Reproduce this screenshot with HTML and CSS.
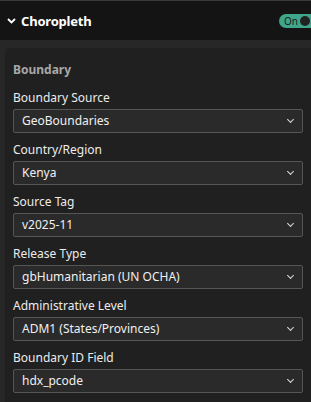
FILE: index.html
```html
<!DOCTYPE html>
<html lang="en">
<head>
    <meta charset="UTF-8">
    <meta name="viewport" content="width=device-width, initial-scale=1.0">
    <title>Choropleth</title>
    <link rel="stylesheet" href="styles.css">
</head>
<body>
  <div class="header">
    <svg class="caret" width="9" height="6" viewBox="0 0 9 6">
      <path d="M1 1 L4.5 4.5 L8 1" fill="none" stroke="#ffffff" stroke-width="1.8"/>
    </svg>
    <span class="title">Choropleth</span>
    <div class="toggle">
      <span>On</span>
      <div class="knob"></div>
    </div>
  </div>

  <div class="content">
    <div class="panel">
      <div class="section-title">Boundary</div>

      <div class="field">
        <label>Boundary Source</label>
        <div class="select">GeoBoundaries</div>
      </div>

      <div class="field">
        <label>Country/Region</label>
        <div class="select">Kenya</div>
      </div>

      <div class="field">
        <label>Source Tag</label>
        <div class="select">v2025-11</div>
      </div>

      <div class="field">
        <label>Release Type</label>
        <div class="select">gbHumanitarian (UN OCHA)</div>
      </div>

      <div class="field">
        <label>Administrative Level</label>
        <div class="select">ADM1 (States/Provinces)</div>
      </div>

      <div class="field">
        <label>Boundary ID Field</label>
        <div class="select">hdx_pcode</div>
      </div>
    </div>
  </div>
</body>
</html>
```

FILE: styles.css
```css
* {
    margin: 0;
    padding: 0;
    box-sizing: border-box;
}

body {
    font-family: 'Noto Sans', 'Open Sans', sans-serif;
    background: #272727;
    color: #e8e8e8;
    height: 100vh;
    overflow: hidden;
    border-top: 1px solid #3a3a3a;
}

/* Collapsible header */
.header {
    height: 39px;
    background: #141414;
    display: flex;
    align-items: center;
    padding-left: 7px;
    overflow: hidden;
}

.caret {
    margin-right: 5px;
    margin-top: 1px;
}

.title {
    font-size: 13px;
    font-weight: 700;
    color: #ffffff;
    letter-spacing: -0.2px;
}

.toggle {
    margin-left: auto;
    margin-right: -6px;
    flex-shrink: 0;
    width: 38px;
    height: 14px;
    border-radius: 7px;
    background: #3fa68b;
    display: flex;
    align-items: center;
    padding-left: 5px;
    gap: 2px;
    font-size: 10px;
    color: #1c1c1c;
}

.knob {
    width: 10px;
    height: 10px;
    border-radius: 50%;
    background: #222222;
}

.content {
    padding: 8px 0 0 5px;
}

.panel {
    background: #202020;
    border-radius: 4px 0 0 0;
    padding: 14px 8px 0 8px;
    height: 360px;
}

.section-title {
    font-size: 12px;
    line-height: 16px;
    font-weight: 700;
    color: #a8a8a8;
    margin-bottom: 12px;
}

.field {
    display: flex;
    flex-direction: column;
    gap: 3px;
    margin-bottom: 9px;
}

.field label {
    font-size: 12px;
    line-height: 16px;
    color: #ececec;
}

.select {
    height: 24px;
    background: #2a2a2a;
    border: 1px solid #555555;
    border-radius: 2px;
    padding: 0 28px 0 8px;
    font-size: 12px;
    line-height: 22px;
    color: #f0f0f0;
    position: relative;
}

/* dropdown chevron */
.select::after {
    content: '';
    position: absolute;
    right: 9px;
    top: 7px;
    width: 4px;
    height: 4px;
    border-right: 1.5px solid #dddddd;
    border-bottom: 1.5px solid #dddddd;
    transform: rotate(45deg);
}
```
